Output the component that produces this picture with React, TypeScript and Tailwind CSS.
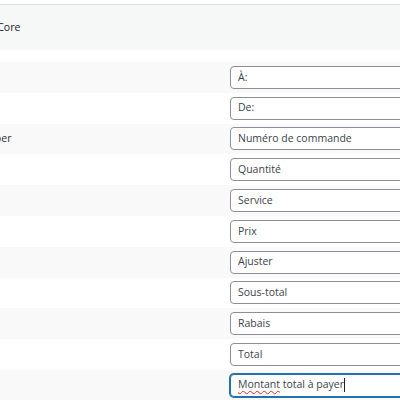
const champs = [
  { label: "To", valeur: "À:" },
  { label: "From", valeur: "De:" },
  { label: "Order Number", valeur: "Numéro de commande" },
  { label: "Quantity", valeur: "Quantité" },
  { label: "Service", valeur: "Service" },
  { label: "Price", valeur: "Prix" },
  { label: "Adjust", valeur: "Ajuster" },
  { label: "Subtotal", valeur: "Sous-total" },
  { label: "Discount", valeur: "Rabais" },
  { label: "Total", valeur: "Total" },
  { label: "Amount", valeur: "Montant total à payer" },
];

export default function App() {
  return (
    <div
      className="w-[400px] h-[400px] overflow-hidden bg-white text-[#1d2327]"
      style={{ fontFamily: '"Open Sans", "Noto Sans", sans-serif' }}
    >
      <div className="pt-[4px]">
        <div className="border-t-[1.5px] border-[#dcdcde] bg-[#f6f7f7] h-[46px] flex items-center">
          <span className="text-[10.5px] font-medium whitespace-nowrap -ml-[40px]">Invoice Core</span>
        </div>
        <div className="h-[12px]" />
        <div className="flex flex-col">
          {champs.map((c, i) => {
            const dernier = i === champs.length - 1;
            return (
              <div
                key={i}
                className={
                  "h-[30.8px] flex items-center " +
                  (i % 2 === 0 ? "bg-[#f9f9f9]" : "bg-white")
                }
              >
                <div className="w-[230px] shrink-0 flex">
                  {c.label === "Order Number" && (
                    <span className="-ml-[61px] text-[10.5px] font-medium text-[#2c3338] whitespace-nowrap">
                      {c.label}
                    </span>
                  )}
                </div>
                {dernier ? (
                  <div className="w-[240px] shrink-0 h-[23px] rounded-[4px] border border-[#2271b1] shadow-[0_0_0_1px_#2271b1] bg-white flex items-center pl-[7px] text-[10.5px] text-[#3c434a] whitespace-nowrap">
                    <span className="underline decoration-wavy decoration-[#e02424] decoration-[1px] underline-offset-[2px]">
                      Montant
                    </span>
                    <span>&nbsp;total à payer</span>
                    <span className="w-px h-[14px] bg-[#1d2327]" />
                  </div>
                ) : (
                  <div className="w-[240px] shrink-0 h-[23px] rounded-[4px] border border-[#8c8f94] bg-white flex items-center pl-[7px] text-[10.5px] text-[#3c434a] whitespace-nowrap">
                    {c.valeur}
                  </div>
                )}
              </div>
            );
          })}
        </div>
      </div>
    </div>
  );
}
